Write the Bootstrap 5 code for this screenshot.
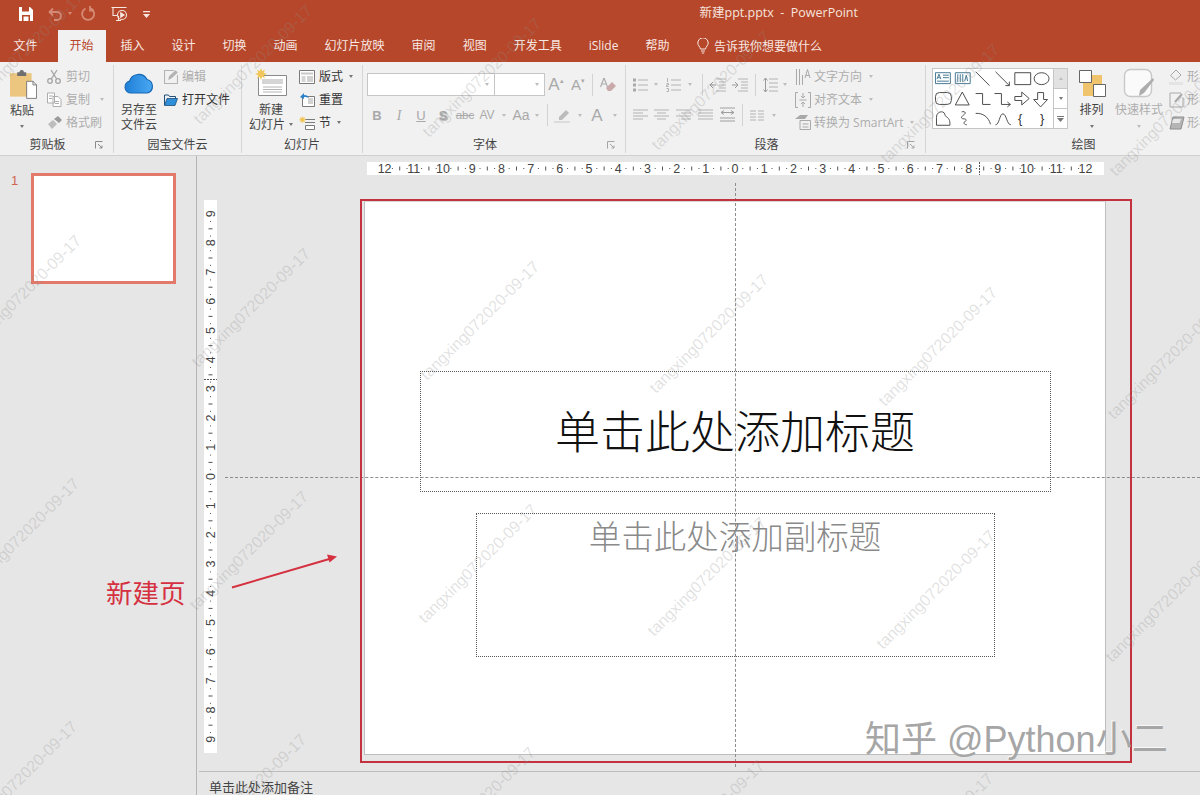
<!DOCTYPE html>
<html lang="zh-CN">
<head>
<meta charset="utf-8">
<title>新建ppt.pptx - PowerPoint</title>
<link href="https://cdn.jsdelivr.net/npm/bootstrap@5.3.0/dist/css/bootstrap.min.css" rel="stylesheet">
<style>
    html, body { height: 795px; overflow: hidden; }
    body { width: 1200px; position: relative; background: #e6e6e6; color: #444; font-family: "Open Sans", "Noto Sans CJK SC", sans-serif; font-size: 12px; line-height: 15px; }
    svg { display: block; flex: none; }

    .titlebar { height: 30px; background: #b7472a; color: #f6e3dd; padding: 0 0 3px 19px; }
    .doc-title { margin-left: auto; margin-right: 342px; padding-bottom: 3px; font-size: 12.5px; white-space: pre; }
    .tabs { height: 32px; background: #b7472a; padding: 0; flex-wrap: nowrap; }
    .tabs .nav-link { height: 32px; padding: 0 13.5px; color: #f8e8e3; line-height: 31px; font-size: 12px; white-space: nowrap; }
    .tabs .file-tab { margin-right: 5px; }
    .tabs .nav-link.active { margin: 0 1.5px; padding: 0 12px; background: #f1f1f1; color: #b7472a; }
    .tabs .tell { padding-left: 14px; display: flex; align-items: center; gap: 5px; }

    .ribbon { height: 94px; background: #f1f1f1; border-bottom: 1px solid #cfcfcf; padding-top: 3px; overflow: hidden; }
    .rb-group { flex: none; height: 88px; border-right: 1px solid #d6d6d6; display: flex; flex-direction: column; }
    .rb-body { height: 71px; display: flex; }
    .rb-label { height: 17px; display: flex; align-items: center; color: #444; font-size: 12px; }
    .rb-label span { flex-grow: 1; text-align: center; }
    .launcher { flex: none; width: 18px; }
    .g1 { width: 114px; } .g2 { width: 128px; } .g3 { width: 121px; } .g4 { width: 263px; } .g5 { width: 300px; } .g6 { width: 315px; border: 0; }

    .big { flex: none; display: flex; flex-direction: column; align-items: center; text-align: center; line-height: 14.5px; white-space: nowrap; font-family: "Liberation Sans", "Noto Sans CJK SC", sans-serif; }
    .col-small { flex: none; display: flex; flex-direction: column; }
    .item { height: 23px; display: flex; align-items: center; gap: 4px; white-space: nowrap; color: #333; }
    .off, .off .item { color: #adadad; }
    .caret { display: inline-block; flex: none; width: 0; height: 0; border: 2.5px solid transparent; border-top: 3px solid #777; border-bottom: 0; }
    .off .caret, .caret.off { border-top-color: #bdbdbd; }

    .cells { display: flex; align-items: center; color: #a9a9a9; }
    .cell { flex: none; display: flex; align-items: center; justify-content: center; height: 22px; }
    .vbar { flex: none; width: 1px; height: 22px; background: #d2d2d2; }
    .combo { height: 23px; background: #fff; border: 1px solid #c6c6c6; display: flex; align-items: center; justify-content: flex-end; padding-right: 5px; }
    .letter { font-family: "Liberation Sans", sans-serif; font-size: 13px; }
    .g-a { font-size: 17px; }

    .gallery { flex: none; width: 136px; height: 61px; margin-top: 3px; background: #fff; border: 1px solid #c6c6c6; display: flex; }
    .gal-scroll { width: 15px; border-left: 1px solid #c6c6c6; display: flex; flex-direction: column; }
    .gal-scroll div { flex: 1; display: flex; align-items: center; justify-content: center; }
    .gal-scroll div + div { border-top: 1px solid #c6c6c6; }
    .gal-scroll .upper { background: #e2e2e2; }

    .workspace { height: 639px; }
    .sidebar { flex: none; width: 197px; border-right: 1px solid #b5b5b5; padding: 17px 0 0 11px; }
    .thumb-no { width: 20px; color: #d0654f; font-size: 13px; font-family: "Liberation Sans", sans-serif; }
    .thumb { width: 145px; height: 111px; background: #fff; border: 3px solid #e2796a; }

    .editor { flex: 1; min-width: 0; }
    .canvas { height: 615px; padding-top: 6px; }
    .hruler { margin-left: 170px; }
    .canvas-row { display: flex; margin-top: 25px; padding-left: 7px; }
    .slide { flex: none; width: 742px; height: 554px; margin: 1px 0 0 147px; background: #fff; border: 1px solid #bdbdbd; border-top-color: #d8d8d8; display: flex; flex-direction: column; align-items: center; font-family: "Noto Sans CJK SC", sans-serif; }
    .ph { flex: none; border: 1px dotted #555; display: flex; justify-content: center; white-space: nowrap; }
    .ph-title { width: 631px; height: 121px; margin-top: 169px; align-items: center; font-size: 45px; line-height: 50px; font-weight: 300; color: #111; padding-bottom: 3px; }
    .ph-sub { width: 519px; height: 144px; margin-top: 21px; font-size: 32.5px; line-height: 42px; font-weight: 300; color: #8a8a8a; }
    .notes { height: 24px; margin-left: 2px; border-top: 1px solid #bcbcbc; padding: 7px 0 0 10px; font-size: 13px; line-height: 17px; color: #444; white-space: nowrap; }

    .overlay { position: absolute; left: 0; top: 0; pointer-events: none; }
    .guide-v { position: absolute; left: 735px; top: 183px; height: 584px; border-left: 1px dashed #8c8c8c; }
    .guide-h { position: absolute; left: 225px; top: 477px; width: 975px; border-top: 1px dashed #8c8c8c; }
    .red-frame { position: absolute; left: 360px; top: 198.5px; width: 772px; height: 564.5px; border: 2.5px solid #c4323f; }
    .note-text { position: absolute; left: 106px; top: 573px; font-size: 26.5px; line-height: 38px; color: #d5303f; white-space: nowrap; font-family: "Noto Sans CJK SC", sans-serif; }
    .zhihu { position: absolute; left: 865px; top: 716px; font-size: 36px; line-height: 48px; color: #a6a6a6; white-space: nowrap; font-family: "Liberation Sans", "Noto Sans CJK SC", sans-serif; text-shadow: -1px -1px 0 rgba(255,255,255,.75); }
</style>
</head>
<body>

<!-- title bar -->
<div class="titlebar d-flex align-items-center">
    <svg width="14" height="14" viewBox="0 0 14 14" style="margin-right:15px"><path d="M0 0h11l3 3v11H0z" fill="#fff"/><path d="M3 0h7v4.500H3z" fill="#b7472a"/><path d="M3 8h8v6H3z" fill="#b7472a"/><path d="M4.500 9.500h5v4.500h-5z" fill="#fff"/></svg>
    <svg width="15" height="14" viewBox="0 0 15 14" fill="none" stroke="#d58b76" stroke-width="1.800"><path d="M5 1.500 1.500 5 5 8.500M2 5h7a4 4 0 0 1 0 8H6"/></svg>
    <span class="caret" style="margin:0 9px 0 5px;border-top-color:#d58b76"></span>
    <svg width="15" height="15" viewBox="0 0 15 15" fill="none" stroke="#d58b76" stroke-width="1.800" style="margin-right:15px"><path d="M9 2.200a6 6 0 1 1-4.500.3"/><path d="M9 0v4.500H13"/></svg>
    <svg width="17" height="16" viewBox="0 0 17 16" fill="none" stroke="#f8e8e3" stroke-width="1.100" style="margin-right:15px"><path d="M.5 1.500h15M2 1.500v8h4M5 14.500h5"/><circle cx="11" cy="9" r="4.500"/><path d="M9.800 6.800v4.400l3.200-2.200z" fill="#f8e8e3"/><path d="M7.500 10v4.500"/></svg>
    <svg width="7" height="8" viewBox="0 0 7 8" fill="#f8e8e3"><path d="M0 1h7v1.200H0zM0 4h7L3.500 8z"/></svg>
    <span class="doc-title">新建ppt.pptx  -  PowerPoint</span>
</div>

<!-- tabs -->
<ul class="nav tabs">
    <li class="nav-item"><a class="nav-link file-tab" href="#">文件</a></li>
    <li class="nav-item"><a class="nav-link active" href="#">开始</a></li>
    <li class="nav-item"><a class="nav-link" href="#">插入</a></li>
    <li class="nav-item"><a class="nav-link" href="#">设计</a></li>
    <li class="nav-item"><a class="nav-link" href="#">切换</a></li>
    <li class="nav-item"><a class="nav-link" href="#">动画</a></li>
    <li class="nav-item"><a class="nav-link" href="#">幻灯片放映</a></li>
    <li class="nav-item"><a class="nav-link" href="#">审阅</a></li>
    <li class="nav-item"><a class="nav-link" href="#">视图</a></li>
    <li class="nav-item"><a class="nav-link" href="#">开发工具</a></li>
    <li class="nav-item"><a class="nav-link" href="#">iSlide</a></li>
    <li class="nav-item"><a class="nav-link" href="#">帮助</a></li>
    <li class="nav-item"><a class="nav-link tell" href="#">
        <svg width="12" height="16" viewBox="0 0 12 16" fill="none" stroke="#f8e8e3" stroke-width="1"><path d="M3.500 11C3 8.500.8 7.500.8 5a5.200 5.200 0 0 1 10.400 0c0 2.500-2.200 3.500-2.700 6zM4 13h4M4.800 15h2.400"/></svg>
        告诉我你想要做什么</a></li>
</ul>

<!-- ribbon -->
<div class="ribbon d-flex">
    <div class="rb-group g1">
        <div class="rb-body">
            <div class="big" style="width:44px">
                <svg width="27" height="30" viewBox="0 0 30 32" style="margin:4px 0 5px 2px"><path d="M0 4h24v26H0z" fill="#ecc67f"/><path d="M8 3h2.500a2.500 2.500 0 0 1 5 0H18v4H8z" fill="#6f6f6f"/><path d="M18.500 13h7l4 4v15h-11z" fill="#fff" stroke="#666" stroke-width=".9"/><path d="M25.500 13v4h4" fill="none" stroke="#666" stroke-width=".9"/></svg>
                <span>粘贴</span>
                <span class="caret" style="margin-top:6px"></span>
            </div>
            <div class="col-small off" style="margin-left:3px">
                <div class="item"><svg width="14" height="15" viewBox="0 0 14 15" fill="none" stroke="#a4a4a4" stroke-width="1.300"><circle cx="3" cy="12" r="2.300"/><circle cx="11" cy="12" r="2.300"/><path d="M4.300 10 10 1M9.700 10 4 1"/></svg><span style="margin-left:1px">剪切</span></div>
                <div class="item"><svg width="15" height="15" viewBox="0 0 15 15" fill="#fff" stroke="#adadad"><path d="M.5 1h7v10h-7zM6 4.500h5l3 3v7H6z"/><path d="M2 4h4M2 6.500h3M8 9.500h4M8 11.500h4" fill="none"/></svg><span>复制</span><span class="caret" style="margin-left:6px"></span></div>
                <div class="item"><svg width="15" height="13" viewBox="0 0 15 13"><path d="m1 8 5-4 4 4-5 5z" fill="#bdbdbd"/><path d="m7 3 4-3 4 4-3 3z" fill="#9a9a9a"/></svg><span>格式刷</span></div>
            </div>
        </div>
        <div class="rb-label"><span>剪贴板</span>
            <div class="launcher"><svg width="8" height="8" viewBox="0 0 8 8" fill="none" stroke="#8a8a8a"><path d="M.5 7.500v-7h7M3 3l4 4M7 4.500V7H4.500"/></svg></div>
        </div>
    </div>

    <div class="rb-group g2">
        <div class="rb-body">
            <div class="big" style="width:36px;margin-left:7px">
                <svg width="30" height="21" viewBox="0 0 30 21" style="margin:8px 0 9px"><defs><linearGradient id="cloudFill" x1="0" x2="1" y1="0" y2="0"><stop offset="0" stop-color="#1f7fd6"/><stop offset="1" stop-color="#4aa8f2"/></linearGradient></defs><path d="M7 20a6 6 0 0 1-1.500-11.800A9.500 9.500 0 0 1 23 6.500 7 7 0 0 1 23.500 20z" fill="url(#cloudFill)" stroke="#1668b5" stroke-width="1.200"/></svg>
                <span>另存至</span>
                <span>文件云</span>
            </div>
            <div class="col-small" style="margin-left:7px">
                <div class="item off"><svg width="14" height="14" viewBox="0 0 14 14" fill="none" stroke="#b3b3b3" stroke-width="1.100"><path d="M10 .5H.5v13h13V5"/><path d="m5 9 .5-2.500L11.500 1 13 2.500 7 8z" fill="#b3b3b3"/></svg><span>编辑</span></div>
                <div class="item"><svg width="14" height="12" viewBox="0 0 14 12"><path d="M.5 11V1h4l1 1.500h6V5" fill="none" stroke="#1f4e79"/><path d="M3 4.500h10.500L11 11.500H.5z" fill="#2f8fd8" stroke="#1f4e79" stroke-width=".8"/></svg><span>打开文件</span></div>
            </div>
        </div>
        <div class="rb-label"><span>园宝文件云</span></div>
    </div>

    <div class="rb-group g3">
        <div class="rb-body">
            <div class="big" style="width:46px;margin-left:6px">
                <svg width="32" height="28" viewBox="0 0 32 28" style="margin:3px 0 7px 0"><path d="M3.500 7.500h28v20h-28z" fill="#fff" stroke="#8a8a8a"/><path d="M7 11h21v5H7z" fill="#d5d5d5"/><path d="M8 19h19M8 21.500h19M8 24h19" stroke="#b5b5b5"/><path d="M6 0l1.200 3.200L10 1.500 8.800 4.800 12 6 8.800 7.200 10 10.500 7.200 8.800 6 12 4.800 8.800 2 10.500 3.200 7.200 0 6l3.200-1.200L2 1.500l2.800 1.700z" fill="#f1c75a"/></svg>
                <span>新建</span>
                <span class="d-flex align-items-center gap-1">幻灯片<span class="caret"></span></span>
            </div>
            <div class="col-small" style="margin-left:5px">
                <div class="item"><svg width="16" height="14" viewBox="0 0 16 14" fill="#fff" stroke="#7a7a7a"><path d="M.5.500h15v13H.5z"/><path d="M2 2.500h12v2H2z" fill="#c9c9c9" stroke="none"/><path d="M2.500 6h4v6h-4z" fill="#d5d5d5" stroke="none"/><path d="M8 7h6M8 9h6M8 11h6" fill="none" stroke="#a5a5a5"/></svg><span>版式</span><span class="caret" style="margin-left:2px"></span></div>
                <div class="item"><svg width="16" height="14" viewBox="0 0 16 14" fill="#fff" stroke="#7a7a7a"><path d="M3.500 3.500h12v10h-12z"/><path d="M9 6h5M9 8h5M9 10h5" fill="none" stroke="#a5a5a5"/><path d="M1 4 5 0v2c3 0 4 1 5 3-2-1-3-1-5-1v2z" fill="#2e82c8" stroke="none"/></svg><span>重置</span></div>
                <div class="item"><svg width="17" height="14" viewBox="0 0 17 14" fill="#fff" stroke="#7a7a7a"><path d="M6 3.500h10M6 6.500h10M6.500 9.500h9v4h-9z"/><path d="M3.500 0l.8 2 2-1-1 2 2 .8-2 .8 1 2-2-1-.8 2-.8-2-2 1 1-2-2-.8 2-.8-1-2 2 1z" fill="#f1c75a" stroke="none"/></svg><span style="margin-left:-1px">节</span><span class="caret" style="margin-left:2px"></span></div>
            </div>
        </div>
        <div class="rb-label"><span>幻灯片</span></div>
    </div>

    <div class="rb-group g4">
        <div class="rb-body flex-column" style="padding-left:4px">
            <div class="cells letter" style="margin-top:8px;height:23px">
                <div class="combo" style="width:128px"><span class="caret off"></span></div>
                <div class="combo" style="width:51px;margin-left:-1px"><span class="caret off"></span></div>
                <div class="cell g-a" style="width:22px">A<sup style="font-size:7px">▴</sup></div>
                <div class="cell" style="width:22px;font-size:15px">A<sup style="font-size:7px">▾</sup></div>
                <div class="vbar" style="margin-left:3px"></div>
                <div class="cell" style="width:30px"><svg width="18" height="16" viewBox="0 0 18 16"><path d="M5 1 1.500 10M5 1l3.500 9M3 7h4" fill="none" stroke="#adadad" stroke-width="1.200"/><path d="m7 11 6-6 4 4-5 5H9z" fill="#c9a9a9"/></svg></div>
            </div>
            <div class="cells letter" style="margin:8px 0 0 -1px;height:22px">
                <div class="cell fw-bold" style="width:22px">B</div>
                <div class="cell fst-italic" style="width:22px;font-family:'Liberation Serif',serif;font-size:14px">I</div>
                <div class="cell text-decoration-underline" style="width:22px">U</div>
                <div class="cell fw-bold" style="width:22px;text-shadow:1px 1px 1px #bbb">S</div>
                <div class="cell text-decoration-line-through" style="width:22px;font-size:11.500px">abc</div>
                <div class="cell" style="width:22px;font-size:12px">AV</div>
                <div class="cell" style="width:12px"><span class="caret off"></span></div>
                <div class="cell" style="width:22px;font-size:14px">Aa</div>
                <div class="cell" style="width:10px"><span class="caret off"></span></div>
                <div class="vbar" style="margin-left:5px"></div>
                <div class="cell" style="width:28px"><svg width="18" height="16" viewBox="0 0 18 16"><path d="M1 14h16v2H1z" fill="#dcdcdc"/><path d="m6 10 7-7 3 3-7 7H6z" fill="#bcbcbc"/></svg></div>
                <div class="cell" style="width:8px"><span class="caret off"></span></div>
                <div class="cell g-a" style="width:26px">A</div>
                <div class="cell" style="width:10px"><span class="caret off"></span></div>
            </div>
        </div>
        <div class="rb-label"><span>字体</span>
            <div class="launcher"><svg width="8" height="8" viewBox="0 0 8 8" fill="none" stroke="#a5a5a5"><path d="M.5 7.500v-7h7M3 3l4 4M7 4.500V7H4.500"/></svg></div>
        </div>
    </div>

    <div class="rb-group g5">
        <div class="rb-body">
            <div class="flex-none d-flex flex-column" style="width:169px;padding-left:4px">
                <div class="cells" style="margin-top:8px;height:23px">
                    <div class="cell" style="width:20px"><svg width="15" height="14" viewBox="0 0 15 14" stroke="#b3b3b3"><path d="M5 2h10M5 7h10M5 12h10"/><path d="M0 .5h3v3H0zM0 5.500h3v3H0zM0 10.500h3v3H0z" fill="#aaa" stroke="none"/></svg></div>
                    <div class="cell" style="width:12px"><span class="caret off"></span></div>
                    <div class="cell" style="width:22px"><svg width="15" height="14" viewBox="0 0 15 14" stroke="#b3b3b3"><path d="M5 2h10M5 7h10M5 12h10M1.500 0v4M.5 5.500h2v1.500h-2v1.500h2M.5 10.500h2v3h-2" fill="none"/></svg></div>
                    <div class="cell" style="width:12px"><span class="caret off"></span></div>
                    <div class="vbar" style="margin-left:6px"></div>
                    <div class="cell" style="width:22px;margin-left:3px"><svg width="17" height="14" viewBox="0 0 17 14" stroke="#b3b3b3" fill="none"><path d="M7 1h10M10 4h7M10 7h7M10 10h7M7 13h10"/><path d="M7 7H1M4 4 1 7l3 3" stroke="#9a9a9a"/></svg></div>
                    <div class="cell" style="width:22px"><svg width="17" height="14" viewBox="0 0 17 14" stroke="#b3b3b3" fill="none"><path d="M7 1h10M10 4h7M10 7h7M10 10h7M7 13h10"/><path d="M1 7h6M4 4l3 3-3 3" stroke="#9a9a9a"/></svg></div>
                    <div class="vbar" style="margin-left:5px"></div>
                    <div class="cell" style="width:22px;margin-left:3px"><svg width="15" height="16" viewBox="0 0 15 16" stroke="#b3b3b3" fill="none"><path d="M6 2h9M6 6h9M6 10h9M6 14h9"/><path d="M2.500 1v14M.5 3.500l2-2.500 2 2.500M.5 12.500l2 2.500 2-2.500" stroke="#9a9a9a"/></svg></div>
                    <div class="cell" style="width:8px"><span class="caret off"></span></div>
                </div>
                <div class="cells" style="margin-top:8px;height:22px">
                    <div class="cell" style="width:20px"><svg width="15" height="12" viewBox="0 0 15 12" stroke="#b3b3b3"><path d="M0 1h15M0 4h10M0 7h15M0 10h10"/></svg></div>
                    <div class="cell" style="width:22px"><svg width="15" height="12" viewBox="0 0 15 12" stroke="#b3b3b3"><path d="M0 1h15M3 4h9M0 7h15M3 10h9"/></svg></div>
                    <div class="cell" style="width:22px"><svg width="15" height="12" viewBox="0 0 15 12" stroke="#b3b3b3"><path d="M0 1h15M5 4h10M0 7h15M5 10h10"/></svg></div>
                    <div class="cell" style="width:22px"><svg width="15" height="12" viewBox="0 0 15 12" stroke="#b3b3b3"><path d="M0 1h15M0 4h15M0 7h15M0 10h15"/></svg></div>
                    <div class="cell" style="width:22px"><svg width="15" height="16" viewBox="0 0 15 16" stroke="#9f9f9f" fill="none"><path d="M0 1h15M0 14h15M0 11h15M1 5.500h13M4 3.500l-3 2 3 2M11 3.500l3 2-3 2"/></svg></div>
                    <div class="vbar" style="margin-left:4px"></div>
                    <div class="cell" style="width:28px"><svg width="14" height="11" viewBox="0 0 14 11" stroke="#b3b3b3"><path d="M0 1h6M0 4h6M0 7h6M0 10h6M8 1h6M8 4h6M8 7h6M8 10h6"/></svg></div>
                    <div class="cell" style="width:6px"><span class="caret off"></span></div>
                </div>
            </div>
            <div class="col-small off">
                <div class="item" style="gap:3px"><svg width="16" height="16" viewBox="0 0 16 16" fill="none" stroke="#a9a9a9"><path d="M1.500 0v16M4.500 0v16M7.500 6v10M10 9l2.500-8.500L15 9M10.800 6.500h3.500"/></svg><span>文字方向</span><span class="caret ms-1"></span></div>
                <div class="item" style="gap:3px"><svg width="16" height="16" viewBox="0 0 16 16" fill="none" stroke="#a9a9a9"><path d="M3 .5H.5v15H3M13 .5h2.500v15H13M4.500 8h7M8 1v5M6 4l2 2 2-2M8 15v-5M6 12l2-2 2 2"/></svg><span>对齐文本</span><span class="caret ms-1"></span></div>
                <div class="item" style="gap:3px"><svg width="16" height="15" viewBox="0 0 16 15" fill="none"><path d="M0 4 5 0h8l-3 4z" fill="#a9a9a9"/><path d="M5 5.500h10.500v9H5zM7.500 9h6M7.500 12h6" stroke="#a9a9a9"/></svg><span>转换为 SmartArt</span><span class="caret ms-1"></span></div>
            </div>
        </div>
        <div class="rb-label"><span>段落</span>
            <div class="launcher"><svg width="8" height="8" viewBox="0 0 8 8" fill="none" stroke="#a5a5a5"><path d="M.5 7.500v-7h7M3 3l4 4M7 4.500V7H4.500"/></svg></div>
        </div>
    </div>

    <div class="rb-group g6">
        <div class="rb-body" style="padding-left:6px">
            <div class="gallery">
                <svg width="120" height="59" viewBox="0 0 121 59" fill="none" stroke="#4d4d4d">
                    <g stroke="#4a7a94"><path d="M2.500 3.500h15v11h-15zM10 6h6M10 8.500h6M4 12h12"/><path d="m4 10 2-5 2 5M4.800 8.500h2.400"/><path d="M22.500 3.500h15v11h-15zM25 5v8M27.500 5v8M30 5v8M32 12l1.500-6 1.500 6"/></g>
                    <path d="m43 2.500 14 14M63 2.500l14 14M77 16.500h-4M77 16.500v-4"/>
                    <path d="M82.500 3.500h16v12h-16z"/><ellipse cx="109.500" cy="9.500" rx="7.500" ry="6"/>
                    <rect x="2.500" y="23.500" width="16" height="12" rx="4"/><path d="m29.500 23 7 13h-14z"/>
                    <path d="M43 24.500h7v11h8M62 24.500h7v11h9M78 35.500l-3-2.500M78 35.500l-3 2.500"/>
                    <path d="M82.500 27.500h7V23l7.500 6.500-7.500 6.500v-4.500h-7zM105.500 23.500h6v7h4l-7 7.500-7-7.500h4z"/>
                    <path d="M3.500 56.500v-8c0-4 3-6 6-5.500 3 .5 2 4 4 5s4 3 3.500 8.500z"/>
                    <path d="M29 43c3-1 5 1 2 3s-3 4 0 4 3 2 1 3 0 3 2 3"/>
                    <path d="M43 44.500c7-.5 13 3.500 15 11M63 56c4 0 4-11 7.500-11s4 11 8 11"/>
                    <text x="88" y="54" fill="#333" stroke="none" font-size="13" text-anchor="middle" font-family="Liberation Sans">{</text>
                    <text x="110" y="54" fill="#333" stroke="none" font-size="13" text-anchor="middle" font-family="Liberation Sans">}</text>
                </svg>
                <div class="gal-scroll">
                    <div class="upper"><span class="caret off" style="transform:rotate(180deg)"></span></div>
                    <div><span class="caret"></span></div>
                    <div class="flex-column"><svg width="7" height="6" viewBox="0 0 7 6" fill="#777"><path d="M0 0h7v1H0zM0 2h7L3.500 6z"/></svg></div>
                </div>
            </div>
            <div class="big" style="width:47px">
                <svg width="28" height="28" viewBox="0 0 28 28" style="margin:4px 0 6px"><path d="M11 6h13v13H11zM5 14h13v13H5z" fill="#f0c36d"/><path d="M1.500 1.500h12v12h-12zM15.500 15.500h12v12h-12z" fill="#fff" stroke="#666"/></svg>
                <span>排列</span>
                <span class="caret" style="margin-top:7px"></span>
            </div>
            <div class="big off" style="width:48px">
                <svg width="32" height="32" viewBox="0 0 32 32" style="margin:3px 0 3px"><rect x="1.500" y="1.500" width="27" height="27" rx="6" fill="#fafafa" stroke="#c8c8c8" stroke-width="1.400"/><path d="m30 10 1 2-10 13-5 3 1-6z" fill="#adadad"/></svg>
                <span>快速样式</span>
                <span class="caret" style="margin-top:7px"></span>
            </div>
            <div class="col-small off" style="margin-left:6px">
                <div class="item" style="gap:2px"><svg width="16" height="16" viewBox="0 0 16 16" fill="none" stroke="#a9a9a9"><path d="M7 1 1.500 6.500 6.500 11 12 6z"/><path d="M0 13h14v3H0z" fill="#e4e4e4" stroke="none"/></svg><span>形状填充</span></div>
                <div class="item" style="gap:2px"><svg width="16" height="16" viewBox="0 0 16 16" fill="none" stroke="#a9a9a9"><path d="M12 1H1v14h13V6"/><path d="m6 10 7-8" stroke-width="2"/></svg><span>形状轮廓</span></div>
                <div class="item" style="gap:2px"><svg width="16" height="14" viewBox="0 0 16 14"><path d="M4 1h11l-3 12H1z" fill="#b5b5b5" stroke="#8e8e8e"/><path d="M4 3h8l-1.500 4H3z" fill="#e8e8e8"/></svg><span>形状效果</span></div>
            </div>
        </div>
        <div class="rb-label"><span>绘图</span></div>
    </div>
</div>

<!-- slide pane + editor -->
<div class="workspace d-flex">
    <div class="sidebar d-flex">
        <div class="thumb-no">1</div>
        <div class="thumb"></div>
    </div>
    <div class="editor d-flex flex-column">
        <div class="canvas">
            <svg class="hruler" id="hruler" width="737" height="13"></svg>
            <div class="canvas-row">
                <svg id="vruler" width="13" height="553"></svg>
                <div class="slide">
                    <div class="ph ph-title">单击此处添加标题</div>
                    <div class="ph ph-sub">单击此处添加副标题</div>
                </div>
            </div>
        </div>
        <div class="notes">单击此处添加备注</div>
    </div>
</div>

<!-- things lying over the editor -->
<div class="guide-v"></div>
<div class="guide-h"></div>
<div class="red-frame"></div>
<svg class="overlay" width="1200" height="795"><path d="M232 587.500 331 558.500" stroke="#d5303f" stroke-width="2"/><path d="m337 556.500-10-2 2.500 8z" fill="#d5303f"/></svg>
<div class="note-text">新建页</div>
<div class="zhihu">知乎 @Python小二</div>
<svg class="overlay" id="marks" width="1200" height="795"></svg>

<script>
    const RULER_STEP = 29.2;
    const inkColor = '#555';

    // ruler marks: numbers every unit, a tick on the half, dots on the quarters
    function buildRuler(svg, zero, count, vertical) {
        let html = `<rect width="100%" height="100%" fill="#fff"/>`;
        for (let i = -count; i <= count; i++) {
            const p = zero + i * RULER_STEP;
            const at = vertical ? `translate(7,${p}) rotate(-90)` : `translate(${p},7)`;
            html += `<text transform="${at}" y="4" fill="#444" font-size="12.5" text-anchor="middle" font-family="Liberation Sans">${Math.abs(i)}</text>`;
            if (i === count) continue;
            [0.25, 0.5, 0.75].forEach((f) => {
                const q = p + f * RULER_STEP;
                const len = f === 0.5 ? 4 : 1;
                const a = (13 - len) / 2;
                html += vertical
                    ? `<rect x="${a}" y="${q}" width="${len}" height="1" fill="${inkColor}"/>`
                    : `<rect x="${q}" y="${a}" width="1" height="${len}" fill="${inkColor}"/>`;
            });
        }
        svg.innerHTML = html;
    }
    buildRuler(document.getElementById('hruler'), 368, 12, false);
    buildRuler(document.getElementById('vruler'), 276.5, 9, true);
    document.getElementById('hruler').insertAdjacentHTML('beforeend', '<path d="M612.500 0v13" stroke="#555" stroke-dasharray="2 1"/>');
    document.getElementById('vruler').insertAdjacentHTML('beforeend', '<path d="M0 179.500h13" stroke="#555" stroke-dasharray="2 1"/>');

    // faint diagonal stamp repeated over the whole shot
    let marks = '';
    for (let c = -2; c <= 3; c++) {
        for (let r = -1; r <= 2; r++) {
            const x = 427 + 229 * c - 2 * r;
            const y = 381 + 13 * c + 243 * r;
            marks += `<text transform="translate(${x},${y}) rotate(-45)" font-size="16" fill="#8c8c8c" fill-opacity=".26" font-family="Liberation Sans">tangxing072020-09-17</text>`;
        }
    }
    document.getElementById('marks').innerHTML = marks;
</script>
<script src="https://cdn.jsdelivr.net/npm/bootstrap@5.3.0/dist/js/bootstrap.bundle.min.js"></script>
</body>
</html>
